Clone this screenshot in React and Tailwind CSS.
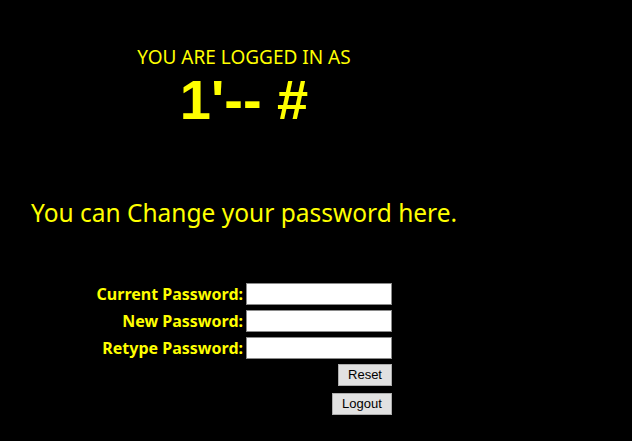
import React from 'react';

const Field = ({ label }) => (
  <div className="flex items-center h-[27px]">
    <label className="w-[246px] text-right pr-[3px] font-bold text-[16px] text-[#ffff00]">{label}</label>
    <input type="password" className="w-[146px] h-[22px] bg-white border border-[#8a8a8a] outline-none" />
  </div>
);

const App = () => {
  return (
    <div className="w-[632px] h-[441px] bg-black text-[#ffff00] overflow-hidden" style={{ fontFamily: '"Noto Sans", "Open Sans", sans-serif' }}>
      <div className="w-[488px] pt-[43px] flex flex-col items-center">
        <p className="text-[19px] leading-[28px]">YOU ARE LOGGED IN AS</p>
        <p className="text-[56px] font-bold leading-[58px]" style={{ fontFamily: '"Liberation Sans", Arial, sans-serif' }}>1'-- #</p>
      </div>
      <p className="pl-[31px] mt-[68px] text-[24.5px] leading-[32px]">You can Change your password here.</p>
      <div className="mt-[51px] flex flex-col">
        <Field label="Current Password:" />
        <Field label="New Password:" />
        <Field label="Retype Password:" />
        <div className="w-[392px] flex flex-col items-end gap-[7px] mt-[3px]" style={{ fontFamily: '"Liberation Sans", Arial, sans-serif' }}>
          <button className="w-[54px] h-[22px] bg-[#e1e1e1] border border-[#adadad] text-black text-[13px]">Reset</button>
          <button className="w-[60px] h-[22px] bg-[#e1e1e1] border border-[#adadad] text-black text-[13px]">Logout</button>
        </div>
      </div>
    </div>
  );
};

export default App;
